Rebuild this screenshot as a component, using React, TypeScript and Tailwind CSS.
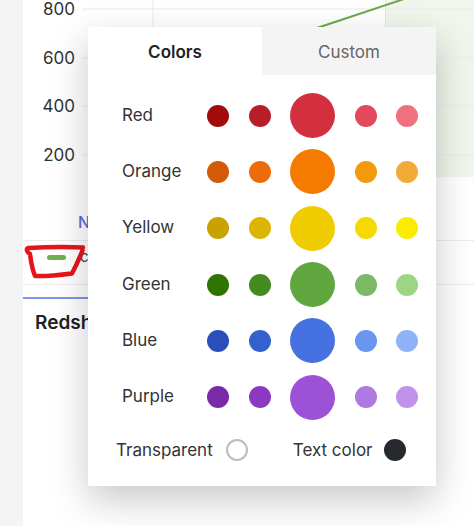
import React from "react";

const rows: { name: string; colors: string[] }[] = [
  { name: "Red", colors: ["#a10c0c", "#b81e28", "#d3303f", "#e2495a", "#f0707f"] },
  { name: "Orange", colors: ["#d35a06", "#ec6c0c", "#f47b00", "#f39a0c", "#f3ab38"] },
  { name: "Yellow", colors: ["#c9a100", "#dbb502", "#efcc00", "#f6d900", "#fbeb00"] },
  { name: "Green", colors: ["#2e7400", "#448a1e", "#60a73f", "#7bb964", "#9cd682"] },
  { name: "Blue", colors: ["#2b4fba", "#3561cd", "#4671e1", "#6a96f2", "#8fb3f9"] },
  { name: "Purple", colors: ["#7a2aa9", "#8b39c1", "#9c51d7", "#ae7ae1", "#c192ea"] },
];

function Chart() {
  const grid = [
    { y: 9, label: "800" },
    { y: 58, label: "600" },
    { y: 106, label: "400" },
    { y: 155, label: "200" },
  ];
  return (
    <svg width="451" height="208" viewBox="23 0 451 208" className="block shrink-0">
      <rect x="385" y="0" width="89" height="177" fill="#f0f6ec" />
      {grid.map((g) => (
        <g key={g.label}>
          <line x1="82" y1={g.y} x2="474" y2={g.y} stroke="#ebebeb" strokeWidth="1" />
          <text
            x="75"
            y={g.y + 6}
            textAnchor="end"
            fontSize="17"
            fill="#333"
            style={{ fontFamily: "Inter, sans-serif" }}
          >
            {g.label}
          </text>
        </g>
      ))}
      <line x1="153" y1="0" x2="153" y2="200" stroke="#ebebeb" strokeWidth="1" />
      <line x1="385.5" y1="0" x2="385.5" y2="177" stroke="#e2e8df" strokeWidth="1" />
      <path d="M300 33.5 L 323 26 L 404 -1" fill="none" stroke="#6aaa4a" strokeWidth="2" />
    </svg>
  );
}

export default function App() {
  return (
    <div className="relative flex h-[526px] w-[474px] overflow-hidden bg-[#f4f4f4] [font-family:Inter,sans-serif]">
      <div className="w-[23px] shrink-0" />
      <div className="flex flex-1 flex-col bg-white">
        <Chart />
        <div className="flex h-[28px] items-center pl-[55px] text-[16px] font-medium text-[#5a6ad8]">
          Name
        </div>
        <div className="mt-[4px] relative flex h-[45px] items-start border-y border-[#ececec] pt-[5px]">
          <div className="mt-[9px] ml-[24px] h-[5px] w-[19px] rounded-full bg-[#6db24b]" />
          <span className="ml-[14px] text-[15px] leading-[22px] text-[#444]">count</span>
          <svg
            className="absolute left-0 top-[-1px] overflow-visible"
            width="70"
            height="45"
            viewBox="23 240 70 45"
          >
            <path
              d="M83 247.5 C 65 246.5, 45 247, 28 248 C 25.5 249, 27.5 252.5, 30 254 C 31 262, 32.5 270, 35 276 C 48 276.5, 60 275, 72 273.5 C 76 266, 79.5 258, 82.5 250.5"
              fill="none"
              stroke="#e8141c"
              strokeWidth="4.5"
              strokeLinecap="round"
              strokeLinejoin="round"
            />
          </svg>
        </div>
        <div className="mt-[12px] h-[2px] w-[140px] bg-[#8194ea]" />
        <div className="pl-[12px] pt-[12px] text-[19px] font-semibold leading-[24px] text-[#222]">
          Redshift
        </div>
      </div>

      <div className="absolute left-[88px] top-[27px] flex h-[459px] w-[348px] flex-col bg-white shadow-[0_14px_36px_rgba(0,0,0,0.22)]">
        <div className="flex h-[48px] shrink-0">
          <div className="flex flex-1 items-center justify-center pt-[3px] text-[17px] font-semibold text-[#222]">
            Colors
          </div>
          <div className="flex flex-1 items-center justify-center bg-[#f4f4f4] pt-[3px] text-[17px] text-[#666]">
            Custom
          </div>
        </div>
        <div className="flex flex-col pt-[12.5px]">
          {rows.map((r) => (
            <div key={r.name} className="flex h-[56.3px] items-center pl-[34px]">
              <div className="w-[85px] text-[17px] text-[#333]">{r.name}</div>
              <div className="flex items-center gap-[19.5px]">
                {r.colors.map((c, i) => (
                  <div
                    key={c}
                    className={i === 2 ? "h-[45px] w-[45px] rounded-full" : "h-[22px] w-[22px] rounded-full"}
                    style={{ backgroundColor: c }}
                  />
                ))}
              </div>
            </div>
          ))}
        </div>
        <div className="flex h-[50px] items-center pl-[28px]">
          <span className="text-[17px] text-[#333]">Transparent</span>
          <div className="ml-[13px] h-[22px] w-[22px] rounded-full border-2 border-[#bdbdbd]" />
          <span className="ml-[45px] text-[17px] text-[#333]">Text color</span>
          <div className="ml-[12px] h-[22px] w-[22px] rounded-full bg-[#262a2e]" />
        </div>
      </div>
    </div>
  );
}
